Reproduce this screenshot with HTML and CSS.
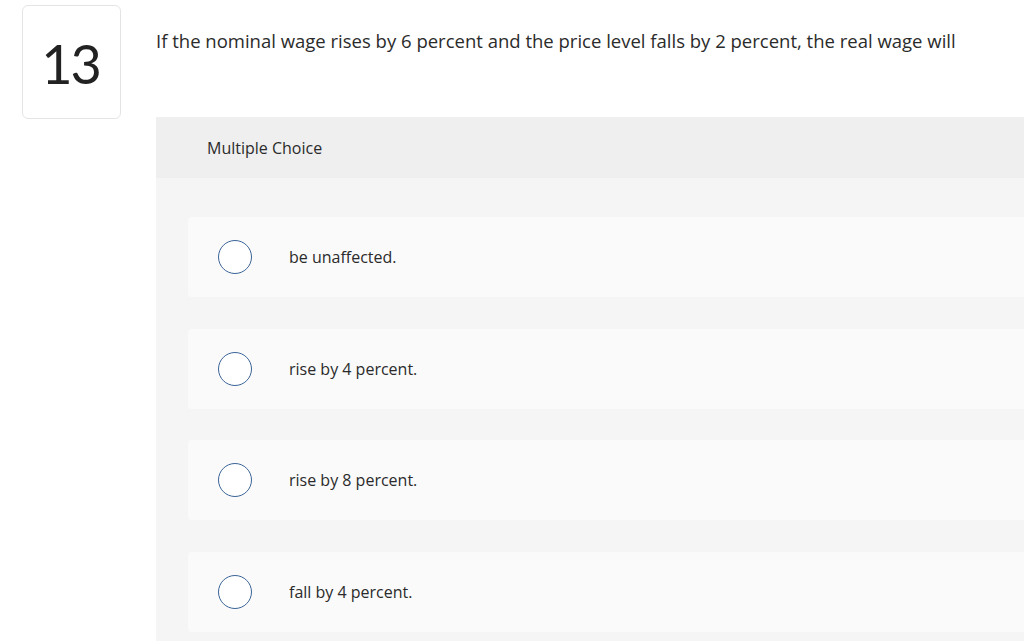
FILE: index.html
```html
<!DOCTYPE html>
<html>
<head>
<meta charset="utf-8">
<link rel="stylesheet" href="styles.css">
</head>
<body>
<div class="page">
  <div class="num">13</div>
  <div class="main">
    <p class="question">If the nominal wage rises by 6 percent and the price level falls by 2 percent, the real wage will</p>
    <div class="panel">
      <div class="panel-head">Multiple Choice</div>
      <div class="panel-body">
        <div class="choice"><span class="radio"></span><span class="label">be unaffected.</span></div>
        <div class="choice"><span class="radio"></span><span class="label">rise by 4 percent.</span></div>
        <div class="choice"><span class="radio"></span><span class="label">rise by 8 percent.</span></div>
        <div class="choice"><span class="radio"></span><span class="label">fall by 4 percent.</span></div>
      </div>
    </div>
  </div>
</div>
</body>
</html>
```

FILE: styles.css
```css
html, body {
  margin: 0;
  padding: 0;
  background: #ffffff;
  overflow: hidden;
}
body {
  font-family: "Open Sans", "Lato", sans-serif;
  font-variant-ligatures: none;
  color: #2b2b2b;
  width: 1024px;
  height: 641px;
}
.page {
  display: flex;
  align-items: flex-start;
  padding: 5px 0 0 22px;
}
.num {
  flex: none;
  box-sizing: border-box;
  width: 99px;
  height: 114px;
  border: 1px solid #e4e4e4;
  border-radius: 6px;
  display: flex;
  align-items: center;
  justify-content: center;
  font-family: "Lato", sans-serif;
  font-size: 54px;
  font-weight: 400;
  letter-spacing: -2px;
  color: #222;
  padding: 2px 2px 0 0;
}
.main {
  flex: 1;
  margin-left: 35px;
  min-width: 0;
}
.question {
  margin: 24px 0 0 0;
  font-size: 18.5px;
  line-height: 24px;
  height: 24px;
  white-space: nowrap;
  color: #2b2b2b;
}
.panel {
  margin-top: 64px;
  background: #f5f5f5;
  height: 524px;
}
.panel-head {
  background: #efefef;
  height: 61px;
  display: flex;
  align-items: center;
  padding-left: 51px;
  font-size: 16px;
  color: #2b2b2b;
}
.panel-body {
  display: flex;
  flex-direction: column;
  gap: 31.7px;
  padding: 39px 0 0 32px;
}
.choice {
  height: 80px;
  background: #fafafa;
  border-radius: 4px 0 0 4px;
  display: flex;
  align-items: center;
  padding-left: 30px;
}
.radio {
  flex: none;
  box-sizing: border-box;
  width: 34px;
  height: 34px;
  border: 1.5px solid #3a6498;
  border-radius: 50%;
  background: #fff;
}
.label {
  margin-left: 37px;
  font-size: 16px;
  color: #2b2b2b;
}
```
